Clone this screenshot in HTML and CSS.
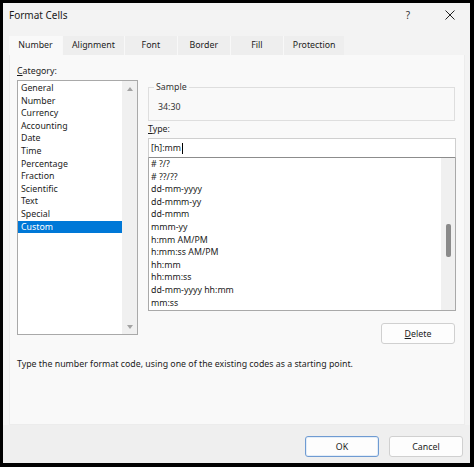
FILE: index.html
```html
<!DOCTYPE html>
<html lang="en">
<head>
<meta charset="utf-8">
<title>Format Cells</title>
<link rel="stylesheet" href="styles.css">
</head>
<body>
<div class="dialog">
  <div class="titlebar">
    <span class="title">Format Cells</span>
    <span class="help">?</span>
    <span class="close"><svg width="10" height="10" viewBox="0 0 10 10"><path d="M0.5 0.5 L9.5 9.5 M9.5 0.5 L0.5 9.5" stroke="#222" stroke-width="1" fill="none"/></svg></span>
  </div>
  <div class="tabs">
    <div class="tab active">Number</div>
    <div class="tab">Alignment</div>
    <div class="tab">Font</div>
    <div class="tab">Border</div>
    <div class="tab">Fill</div>
    <div class="tab">Protection</div>
  </div>
  <div class="panel">
    <div class="columns">
      <div class="left">
        <div class="label"><u>C</u>ategory:</div>
        <div class="catlist">
          <ul class="items">
            <li>General</li>
            <li>Number</li>
            <li>Currency</li>
            <li>Accounting</li>
            <li>Date</li>
            <li>Time</li>
            <li>Percentage</li>
            <li>Fraction</li>
            <li>Scientific</li>
            <li>Text</li>
            <li>Special</li>
            <li class="selected">Custom</li>
          </ul>
          <div class="vscroll">
            <span class="arrow-up"></span>
            <span class="arrow-down"></span>
          </div>
        </div>
      </div>
      <div class="right">
        <fieldset class="sample">
          <legend>Sample</legend>
          <div class="sample-value">34:30</div>
        </fieldset>
        <div class="label type-label"><u>T</u>ype:</div>
        <div class="type-input">[h]:mm<span class="caret"></span></div>
        <div class="typelist">
          <ul class="items type-items">
            <li># ?/?</li>
            <li># ??/??</li>
            <li>dd-mm-yyyy</li>
            <li>dd-mmm-yy</li>
            <li>dd-mmm</li>
            <li>mmm-yy</li>
            <li>h:mm AM/PM</li>
            <li>h:mm:ss AM/PM</li>
            <li>hh:mm</li>
            <li>hh:mm:ss</li>
            <li>dd-mm-yyyy hh:mm</li>
            <li>mm:ss</li>
          </ul>
          <div class="vscroll2"><div class="thumb"></div></div>
        </div>
        <div class="delete-row"><button class="btn"><u>D</u>elete</button></div>
      </div>
    </div>
    <p class="hint">Type the number format code, using one of the existing codes as a starting point.</p>
  </div>
  <div class="footer">
    <button class="btn ok">OK</button>
    <button class="btn">Cancel</button>
  </div>
</div>
</body>
</html>
```

FILE: styles.css
```css
* { box-sizing: border-box; }
html, body { margin: 0; padding: 0; }
body {
  background: #000;
  width: 474px;
  height: 467px;
  padding: 3px 4px 4px 3px;
  overflow: hidden;
  font-family: "Noto Sans", "Open Sans", sans-serif;
  font-size: 8.8px;
  color: #1b1b1b;
}
.dialog {
  width: 467px;
  height: 460px;
  background: #f3f3f3;
  display: flex;
  flex-direction: column;
}
.titlebar {
  height: 24px;
  display: flex;
  align-items: center;
  padding-left: 6px;
  font-size: 10px;
}
.title { flex: 1; }
.help {
  width: 20px;
  text-align: center;
  color: #333;
  font-size: 10px;
}
.close {
  width: 20px;
  margin-left: 22px;
  margin-right: 10px;
  display: flex;
  justify-content: center;
}
.close svg { display: block; }

.tabs {
  display: flex;
  margin: 9px 0 0 6px;
  height: 19px;
}
.tab {
  padding: 0 9px;
  min-width: 53px;
  text-align: center;
  line-height: 19px;
  background: #eeeeee;
  border-left: 1px solid #f8f8f8;
}
.tab.active {
  background: #f9f9f9;
  border-left: none;
}

.panel {
  margin-left: 6px;
  width: 456px;
  height: 370px;
  background: #f9f9f9;
  border: 1px solid #ececec;
  border-top: none;
  padding: 10px 8px 0 7px;
}
.columns {
  display: flex;
  gap: 10px;
}
.left { width: 121px; }
.right { width: 308px; }
.label {
  line-height: 12px;
  height: 12px;
}
.catlist {
  margin-top: 3px;
  height: 255px;
  border: 1px solid #a9a9a9;
  background: #fff;
  display: flex;
}
.items {
  list-style: none;
  margin: 0;
  padding: 1px 0 0 0;
  flex: 1;
}
.items li {
  line-height: 12.6px;
  height: 12.6px;
  padding-left: 3px;
  white-space: nowrap;
}
.items li.selected {
  background: #0078d7;
  color: #fff;
}
.vscroll {
  width: 15px;
  background: #f0f0f0;
  display: flex;
  flex-direction: column;
  justify-content: space-between;
  align-items: center;
  padding: 6px 0 5px;
}
.arrow-up, .arrow-down {
  width: 0;
  height: 0;
  border-left: 3.5px solid transparent;
  border-right: 3.5px solid transparent;
}
.arrow-up { border-bottom: 4px solid #a3a3a3; }
.arrow-down { border-top: 4px solid #a3a3a3; }

.sample {
  margin: 16px 0 0 0;
  width: 307px;
  border: 1px solid #dedede;
  padding: 0 0 7px 5px;
  min-width: 0;
}
.sample legend {
  padding: 0 2px;
  line-height: 12px;
  color: #333;
}
.sample-value {
  margin-top: 8px;
  line-height: 12px;
  padding-left: 4px;
  color: #333;
}
.type-label { margin-top: 2px; }
.type-input {
  margin-top: 3px;
  height: 20px;
  background: #fff;
  border: 1px solid #cfcfcf;
  border-bottom-color: #8c8c8c;
  padding-left: 2px;
  line-height: 18px;
  display: flex;
  align-items: center;
}
.caret {
  display: inline-block;
  width: 1px;
  height: 11px;
  background: #000;
  margin-left: 1px;
}
.typelist {
  height: 153px;
  background: #fff;
  border: 1px solid #a9a9a9;
  border-top: none;
  display: flex;
}
.type-items { padding-top: 0; }
.type-items li { padding-left: 2px; }
.vscroll2 {
  width: 14px;
  background: #f0f0f0;
  padding-top: 66px;
  display: flex;
  justify-content: center;
}
.thumb {
  width: 5px;
  height: 33px;
  background: #8a8a8a;
  border-radius: 2px;
}
.delete-row {
  margin-top: 12px;
  display: flex;
  justify-content: flex-end;
  padding-right: 1px;
}
.btn {
  width: 74px;
  height: 21px;
  padding: 0;
  background: #fdfdfd;
  border: 1px solid #d0d0d0;
  border-radius: 3px;
  font-family: inherit;
  font-size: 8.8px;
  color: #1b1b1b;
}
.btn.ok {
  border-color: #6f9bd2;
  box-shadow: inset 0 0 0 1px #e3edf8;
}
.hint {
  margin: 14px 0 0 0;
  line-height: 12px;
}
.footer {
  flex: 1;
  background: #efefef;
  display: flex;
  justify-content: flex-end;
  align-items: flex-start;
  gap: 10px;
  padding: 11px 7px 0 0;
}
```
